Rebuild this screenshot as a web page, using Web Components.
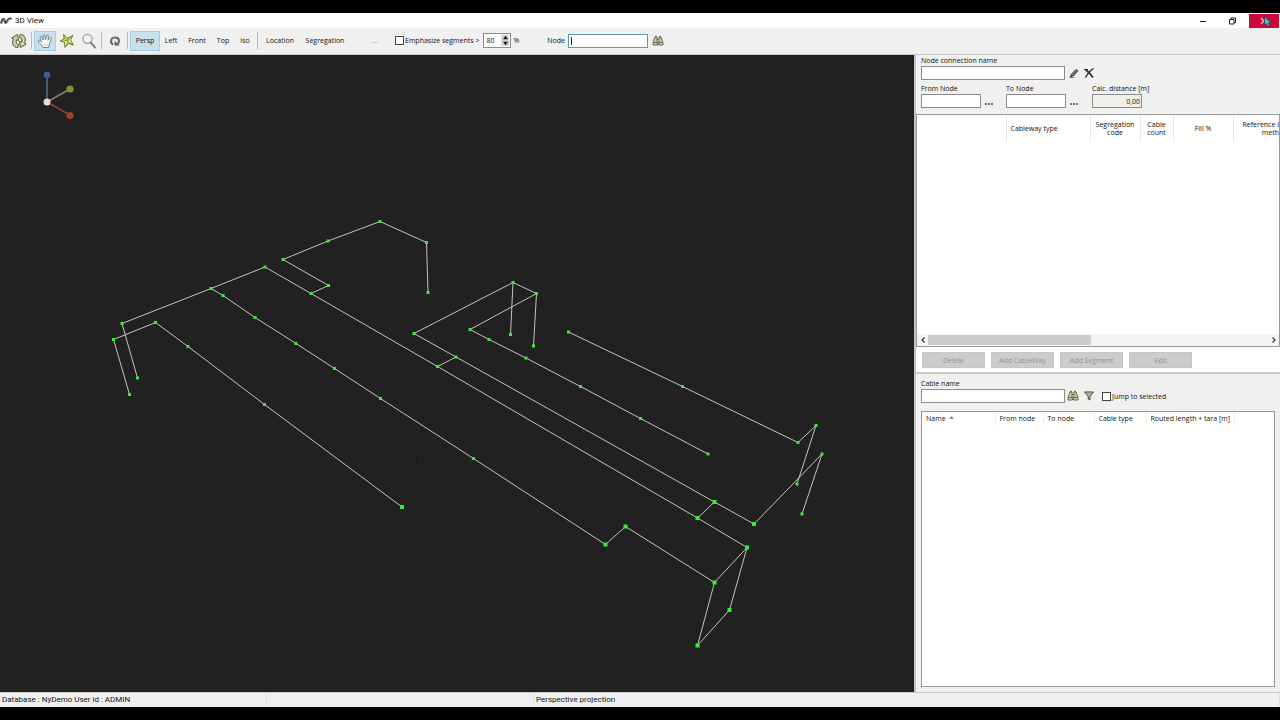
<!DOCTYPE html>
<html lang="en">
<head>
<meta charset="utf-8">
<title>3D View</title>
<style>
html, body { height: 100%; margin: 0; background: #000; }
body { font: 7px/9px "Open Sans", "Noto Sans", sans-serif; color: #111; }
</style>
</head>
<body>
<view-window></view-window>
<script>
const ICONS = {
  logo: ['0 0 12 10', '<path d="M1 7.500C2 3 4 1.500 4.500 4.500S6 8 7.500 4.500 10 3.500 11.500 2" fill="none" stroke="#50504a" stroke-width="2.200" stroke-linejoin="round"/><path d="M2 8L4 3M7 7l2-4" stroke="#98998e" stroke-width=".6"/>'],
  refresh: ['0 0 16 16', '<g fill="#cfd3a6" stroke="#50583c" stroke-width="1" stroke-linejoin="round"><path d="M7 14.500C2 14.500 .500 10 2.500 6L.800 5 6.500 1.500 7.500 7.500 5.500 6.800C4.500 9.500 5.500 11.500 7.500 11.500Z"/><path d="M9 1.500C14 1.500 15.500 6 13.500 10L15.200 11 9.500 14.500 8.500 8.500 10.500 9.200C11.500 6.500 10.500 4.500 8.500 4.500Z"/></g>'],
  hand: ['0 0 16 16', '<path d="M6 14.500C5 12 1.500 9.500 1 7.800c.5-1.200 2-.3 3.500 1.200L3 4.400c-.2-1.300 1.300-1.500 1.700-.3L6.200 7 6.100 2.700c0-1.400 1.700-1.400 1.900 0l.4 4L9.700 3c.4-1.300 2-.9 1.700.4L10.900 7.300 12.800 5c.8-1 2-.2 1.500.9L12.500 10.500l-.8 4Z" fill="#fafafa" stroke="#687782" stroke-width=".9"/><path d="M6.500 12.300q2.500-1 5 0" fill="none" stroke="#aab6bd" stroke-width=".7"/>'],
  orbit: ['0 0 16 16', '<path d="M4.500 1.500L8.500 5 14 2.500 11.500 7 14.500 12 9.500 10.500 6 14.500 5.500 9.500 1 8 5.200 6Z" fill="#e9ee7e" stroke="#77852f" stroke-width="1"/><path d="M4.500 2Q7 9 14 11.800M2 8.500Q9 8 13.500 3M6 14Q10 10 9 5" fill="none" stroke="#61702b" stroke-width=".7"/>'],
  zoom: ['0 0 16 16', '<circle cx="6.500" cy="5.800" r="4.500" fill="#f1f4f5" stroke="#a0a2a2" stroke-width="1.300"/><path d="M9.800 9.500L14 14.500" stroke="#8b8680" stroke-width="2.200" stroke-linecap="round"/>'],
  rotate: ['0 0 12 12', '<path d="M4 9.500C1 8 1.500 2.500 6 2.500s5 4 2.700 6.500" fill="none" stroke="#63645f" stroke-width="2"/><path d="M5.500 6v4.500H11Z" fill="#63645f"/><path d="M3 6Q3 3 6 2.500" stroke="#b7b8ad" stroke-width=".6" fill="none"/>'],
  find: ['0 0 12 12', '<g fill="#cfcda9" stroke="#68674e" stroke-width="1"><path d="M3 2h2v3l.5 5H1V7.500Z"/><path d="M9 2H7v3l-.5 5H11V7.500Z"/><path d="M5 4.500h2M1.500 7.500h3.500M7 7.500h3.500M3 1.300h2M7 1.300h2"/></g>'],
  filter: ['0 0 12 12', '<path d="M1.500 2h9L7 6.300V10L5.200 9V6.300Z" fill="#b7b69d" stroke="#4d4d42" stroke-width="1"/>'],
  pencil: ['0 0 12 12', '<path d="M2 10L3.500 7 8 2.500 10 3.500 6 8.500Z" fill="#55554f" stroke="#3d3d3a" stroke-width=".8"/><path d="M4 8L8.500 3.500" stroke="#bbb" stroke-width=".6"/><path d="M1.500 10.500H6" stroke="#555" stroke-width=".8"/>'],
  cross: ['0 0 12 12', '<path d="M2 2.500Q5 4 10 10.500" stroke="#2b2b2b" stroke-width="1.700" fill="none"/><path d="M10.500 1.500Q6 4 2.500 10.500" stroke="#2b2b2b" stroke-width="1.400" fill="none"/><path d="M1 2.500h4" stroke="#2b2b2b" stroke-width=".9"/>'],
  dots: ['0 0 12 12', '<path d="M2 6h2v2H2zM5 6h2v2H5zM8 6h2v2H8z" fill="#74746f"/>'],
  min: ['0 0 12 12', '<path d="M2 6.500h6" stroke="#222"/>'],
  restore: ['0 0 12 12', '<path d="M1.500 4.500h4.500V9H1.500zM3 4.500V3h4.500v4.500H6" fill="none" stroke="#222" stroke-width="1"/>'],
  left: ['0 0 8 8', '<path d="M5.500 1.500L3 4l2.500 2.500" fill="none" stroke="#333" stroke-width="1.200"/>'],
  right: ['0 0 8 8', '<path d="M2.500 1.500L5 4 2.500 6.500" fill="none" stroke="#333" stroke-width="1.200"/>'],
  up: ['0 0 8 6', '<path d="M1 5L4 1l3 4Z" fill="#111"/>'],
  down: ['0 0 8 6', '<path d="M1 1l3 4 3-4Z" fill="#111"/>'],
  sort: ['0 0 8 6', '<path d="M1 4.500L4 1.500l3 3Z" fill="#777"/>'],
  close: ['0 0 30 14', '<path d="M12 4l3 3-3 3M18 4l-3 3 3 3" fill="none" stroke="#f6bccb" stroke-width="1.200"/><path d="M15.500 2.500v9l2-2 2 3 1.500-1-1.500-2.500 2.500-.5Z" fill="#5cb0c8" stroke="#22343f" stroke-width=".7"/>']
};
const define = (name, html, setup) => {
  const t = document.createElement('template');
  t.innerHTML = html;
  customElements.define(name, class extends HTMLElement {
    connectedCallback() {
      if (this.shadowRoot) return;
      const r = this.attachShadow({ mode: 'open' });
      r.append(t.content.cloneNode(true));
      if (setup) setup(this, r);
    }
  });
};

define('ui-icon', `<style>:host{display:block;width:12px;height:12px;flex:none}svg{display:block;width:100%;height:100%}</style><svg aria-hidden="true"></svg>`, (el, r) => {
  const [box, body] = ICONS[el.getAttribute('name')];
  const svg = r.querySelector('svg');
  svg.setAttribute('viewBox', box);
  svg.innerHTML = body;
});

define('tool-button', `<style>
:host{display:block;flex:none;height:20px}
button{box-sizing:border-box;width:100%;height:100%;margin:0;padding:0;border:1px solid transparent;background:none;color:inherit;font:inherit;display:flex;align-items:center;justify-content:center;white-space:nowrap}
:host([active]) button{background:#c5e1ee;border-color:#a9cbdc}
:host([muted]) button{color:#777}
:host([push]) button{background:#ccc;border-color:#c6c6c6;color:#949494}
</style><button type="button"><slot></slot></button>`, (el, r) => {
  const b = r.querySelector('button');
  if (el.hasAttribute('label')) b.setAttribute('aria-label', el.getAttribute('label'));
  if (el.hasAttribute('push')) b.disabled = true;
});

define('text-field', `<style>
:host{display:flex;flex-direction:column;gap:1px;flex:none}
:host([inline]){flex-direction:row;align-items:center;gap:3px}
label{height:9px;white-space:nowrap}
label:empty{display:none}
input{box-sizing:border-box;width:100%;height:14px;margin:0;padding:0 2px;border:1px solid #8b8c8b;border-radius:0;background:#fff;font:inherit;color:inherit;outline:0}
:host([inline]) input{width:80px;border-color:#6196b4;background:linear-gradient(#222,#222) 2px 50%/1px 8px no-repeat #fff}
input:read-only{background:#efefec;text-align:right;padding-right:1px}
</style><label for="f"></label><input id="f" type="text">`, (el, r) => {
  r.querySelector('label').textContent = el.getAttribute('label');
  const i = r.querySelector('input');
  i.value = el.getAttribute('value') || '';
  i.readOnly = el.hasAttribute('readonly');
});

define('check-field', `<style>
:host{display:flex;align-items:center;gap:1px;flex:none}
input{appearance:none;box-sizing:border-box;width:9px;height:9px;margin:0;border:1px solid #444;background:#fff}
label{white-space:nowrap}
</style><input id="c" type="checkbox"><label for="c"><slot></slot></label>`);

define('spin-field', `<style>
:host{display:flex;box-sizing:border-box;width:28px;height:15px;border:1px solid #8b8b8b;background:#fff;padding:1px;flex:none}
input{appearance:textfield;width:15px;min-width:0;border:0;padding:0 0 0 1px;margin:0;background:none;font:inherit;color:inherit;outline:0}
input::-webkit-inner-spin-button{display:none}
div{display:grid;grid-template-rows:1fr 1fr;width:9px}
button{padding:0;border:0;background:#d5d5d5;display:grid;place-items:center;min-height:0}
ui-icon{width:7px;height:5px}
</style><input type="number" value="80" aria-label="Fill percent"><div><button type="button" aria-label="Increase"><ui-icon name="up"></ui-icon></button><button type="button" aria-label="Decrease"><ui-icon name="down"></ui-icon></button></div>`);

define('title-bar', `<style>
:host{display:flex;align-items:center;height:15px;background:#fff;font-family:Roboto,sans-serif;font-size:8px}
h1{margin:0 0 0 3px;font:inherit;flex:1}
.logo{width:12px;height:10px}
tool-button{width:30px;height:14px}
.close{background:#c90738;margin-right:1px}
.close ui-icon{width:30px;height:14px}
</style><ui-icon class="logo" name="logo"></ui-icon><h1>3D View</h1>
<tool-button label="Minimize"><ui-icon name="min"></ui-icon></tool-button>
<tool-button label="Restore"><ui-icon name="restore"></ui-icon></tool-button>
<tool-button class="close" label="Close"><ui-icon name="close"></ui-icon></tool-button>`);

define('tool-bar', `<style>
:host{display:flex;align-items:center;height:27px;padding:0 8px 1px;background:#f0f0f0;box-sizing:border-box;border-bottom:1px solid #c8c8c8}
.i{width:22px}.i ui-icon{width:16px;height:16px}
.s ui-icon{width:12px;height:12px}
hr{width:1px;height:17px;margin:0 2px 0 1px;border:0;background:#b9b9b9;flex:none}
.p{width:30px}.n{width:22px}.loc{width:40px}.seg{width:50px}.more{width:30px;margin-left:10px}
check-field{margin-left:5px}
spin-field{margin:0 2px 0 4px}
text-field{margin-left:28px}
.find{width:20px}
</style>
<tool-button class="i" label="Refresh"><ui-icon name="refresh"></ui-icon></tool-button><hr>
<tool-button class="i" active label="Pan"><ui-icon name="hand"></ui-icon></tool-button>
<tool-button class="i" label="Orbit"><ui-icon name="orbit"></ui-icon></tool-button>
<tool-button class="i" label="Zoom"><ui-icon name="zoom"></ui-icon></tool-button><hr>
<tool-button class="i s" label="Rotate"><ui-icon name="rotate"></ui-icon></tool-button><hr>
<tool-button class="p" active>Persp</tool-button>
<tool-button class="n">Left</tool-button>
<tool-button class="p">Front</tool-button>
<tool-button class="n">Top</tool-button>
<tool-button class="n">Iso</tool-button><hr>
<tool-button class="loc">Location</tool-button>
<tool-button class="seg">Segregation</tool-button>
<tool-button class="more" muted>...</tool-button>
<check-field>Emphasize segments &gt;</check-field>
<spin-field></spin-field><span>%</span>
<text-field inline label="Node"></text-field>
<tool-button class="find" label="Find node"><ui-icon name="find"></ui-icon></tool-button>`);

define('scene-view', `<style>
:host{display:block;min-width:0;min-height:0;background:#212121}
svg{display:block;width:100%;height:100%}
.e{fill:none;stroke:#c6c4c1;stroke-width:1}
.n{fill:#33f033}
</style><svg viewBox="0 55 914 637" preserveAspectRatio="xMinYMin meet" role="img" aria-label="Cable routing model">
<g stroke-width="1.500"><path d="M47 102V75" stroke="#43749a"/><path d="M47 102L70 89" stroke="#838854"/><path d="M47 102L70 115" stroke="#8b4638"/></g>
<circle cx="47" cy="75" r="3.300" fill="#3f5f94"/><circle cx="70" cy="89" r="3.600" fill="#82943e"/><circle cx="70" cy="115.500" r="3.600" fill="#96432c"/><circle cx="47" cy="102" r="3.500" fill="#dededb"/>
<path d="M416.500 458v5M418 463h1" stroke="#141414"/>
<g class="e"></g><g class="n"></g></svg>`, (el, r) => {
  const routes = [
    [[428,292.5],[426.5,242.5],[380,221.5],[328,241],[283,259.5],[328.5,285.5],[311,293.5]],
    [[137.5,378],[122,323.5],[211,288.5],[265,267],[311,293.5],[437.5,366.5],[697.5,518],[747,547.5],[714.5,582.5],[697.5,645.5],[729.5,610],[747,547.5]],
    [[211,288.5],[223,295.5],[255,317.5],[296,343.5],[334.5,368.5],[380.5,398.5],[473.5,458.5],[605.5,544.5],[625.5,526.5],[714.5,582.5]],
    [[129.5,394.5],[113.5,339.5],[155.5,322.5],[188,346.5],[264.5,404.5],[402,507]],
    [[437.5,366.5],[456,357],[414,333.5],[513,282.5],[536.5,293.5],[470,329.5],[489,339.5],[526,358],[580.5,386.5],[640.5,418.5],[708,454]],
    [[513,282.5],[510.5,334.5]], [[536.5,293.5],[533.5,346]],
    [[456,357],[714.5,502],[754,524],[822,454],[802,514]], [[714.5,502],[697.5,518]],
    [[568.5,332],[682.5,386.5],[798,442.5],[816,425.5],[797,484]]
  ];
  r.querySelector('.e').innerHTML = routes.map(p => `<polyline points="${p.join(' ')}"/>`).join('');
  const nodes = new Map(routes.flat().map(p => [p.join(), p]));
  r.querySelector('.n').innerHTML = [...nodes.values()].map(([x, y]) => {
    const s = y > 500 && x !== 802 ? 4 : 3;
    return `<rect x="${x - s / 2}" y="${y - s / 2}" width="${s}" height="${s}"/>`;
  }).join('');
});

define('connection-panel', `<style>
:host{display:block;background:#f0f0ee}
form{display:grid;gap:4px;padding:1px 0 6px 5px;margin:0}
.row{display:flex;align-items:flex-end}
.name{width:144px}.node{width:60px}.calc{width:50px}
.b{width:15px;height:14px}
.name + .b{margin-left:1px}
.d{margin-right:10px;width:15px;height:10px}
.d + .calc{margin-left:1px}
.grid{height:231px;border:1px solid #999;background:#fffffd;display:flex;flex-direction:column;overflow:hidden}
table{border-collapse:collapse;table-layout:fixed;width:100%}
th{font-weight:400;padding:0;height:27px;line-height:8px;border-right:1px solid #e6e6e4;white-space:nowrap}
th:last-child{text-align:right;border:0}
th:nth-child(2){text-align:left;padding-left:4px}
.bar{margin-top:auto;height:12px;display:flex;align-items:center;background:#f3f3f1}
.bar tool-button{width:11px;height:12px}.bar ui-icon{width:8px;height:8px}
.track{flex:1;height:10px}
.thumb{width:48%;height:100%;background:#cdcdcd}
.actions{display:flex;gap:6px;padding:5px 6px 4px;height:16px;background:#fffffd;border-bottom:2px solid #cacaca}
.actions tool-button{width:63px;height:16px}
</style>
<form>
<div class="row"><text-field class="name" label="Node connection name"></text-field><tool-button class="b" label="Edit name"><ui-icon name="pencil"></ui-icon></tool-button><tool-button class="b" label="Clear name"><ui-icon name="cross"></ui-icon></tool-button></div>
<div class="row"><text-field class="node" label="From Node"></text-field><tool-button class="d" label="Choose from node"><ui-icon name="dots"></ui-icon></tool-button><text-field class="node" label="To Node"></text-field><tool-button class="d" label="Choose to node"><ui-icon name="dots"></ui-icon></tool-button><text-field class="calc" label="Calc. distance [m]" value="0,00" readonly></text-field></div>
</form>
<div class="grid"><table><colgroup><col style="width:89px"><col style="width:84px"><col style="width:50px"><col style="width:33px"><col style="width:60px"><col></colgroup>
<thead><tr><th></th><th>Cableway type</th><th>Segregation<br>code</th><th>Cable<br>count</th><th>Fill %</th><th>Reference i<br>meth</th></tr></thead></table>
<div class="bar"><tool-button label="Scroll left"><ui-icon name="left"></ui-icon></tool-button><div class="track"><div class="thumb"></div></div><tool-button label="Scroll right"><ui-icon name="right"></ui-icon></tool-button></div></div>
<div class="actions"><tool-button push>Delete</tool-button><tool-button push>Add CableWay</tool-button><tool-button push>Add Segment</tool-button><tool-button push>Edit</tool-button></div>`);

define('cable-panel', `<style>
:host{display:flex;flex-direction:column;background:#f0f0ee;padding:5px;box-sizing:border-box}
.row{display:flex;align-items:flex-end;margin-bottom:8px}
.name{width:144px}
tool-button{width:16px;height:15px}
check-field{height:14px;margin-left:5px}
.list{flex:1;border:1px solid #999;background:#fffffd}
table{border-collapse:collapse;table-layout:fixed;width:313px}
th{font-weight:400;text-align:left;padding:0 0 0 4px;height:13px;white-space:nowrap;border-right:1px solid #eee}
th ui-icon{display:inline-block;width:7px;height:5px;margin-left:1px;vertical-align:1px}
</style>
<div class="row"><text-field class="name" label="Cable name"></text-field><tool-button label="Find cable"><ui-icon name="find"></ui-icon></tool-button><tool-button label="Filter"><ui-icon name="filter"></ui-icon></tool-button><check-field>Jump to selected</check-field></div>
<div class="list"><table><colgroup><col style="width:73px"><col style="width:48px"><col style="width:51px"><col style="width:52px"><col></colgroup><thead><tr><th>Name <ui-icon name="sort"></ui-icon></th><th>From node</th><th>To node</th><th>Cable type</th><th>Routed length + tara [m]</th></tr></thead></table></div>`);

define('status-bar', `<style>
:host{display:grid;grid-template-columns:267px 267px 1fr;align-items:center;height:15px;box-sizing:border-box;background:#f0f0ef;border-top:1px solid #ccc;font-family:Roboto,sans-serif;font-size:8px}
span{padding-left:2px;height:12px;line-height:12px;border-right:1px solid #ddd;white-space:nowrap}
</style><span>Database : NyDemo User id : ADMIN</span><span></span><span>Perspective projection</span>`);

define('view-window', `<style>
:host{display:flex;flex-direction:column;box-sizing:border-box;height:100vh;padding:13px 0;background:#000}
main{flex:1;min-height:0;display:grid;grid-template-columns:minmax(0,1fr) 366px}
aside{display:flex;flex-direction:column;border-left:2px solid #c2c2c2;min-height:0}
cable-panel{flex:1}
</style><title-bar></title-bar><tool-bar></tool-bar>
<main><scene-view></scene-view><aside><connection-panel></connection-panel><cable-panel></cable-panel></aside></main>
<status-bar></status-bar>`);
</script>
</body>
</html>
